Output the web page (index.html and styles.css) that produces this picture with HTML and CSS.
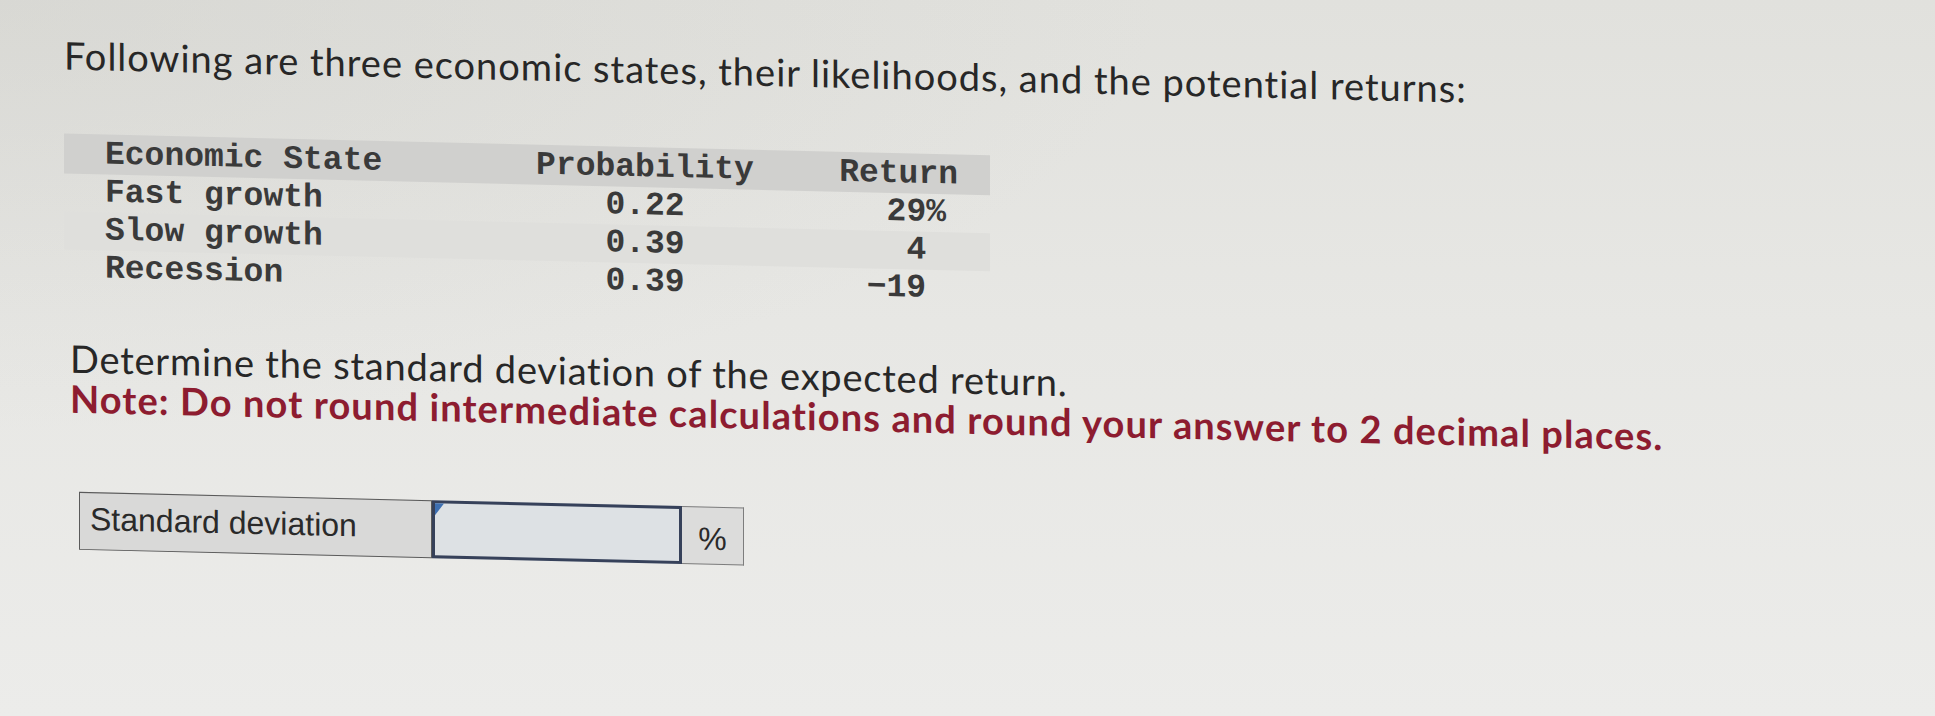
FILE: index.html
```html
<!DOCTYPE html>
<html lang="en">
<head>
<meta charset="utf-8">
<title>Standard deviation question</title>
<link rel="stylesheet" href="styles.css">
</head>
<body>
<div class="page">
  <p class="intro">Following are three economic states, their likelihoods, and the potential returns:</p>
  <div class="table">
    <div class="row head"><div class="c1">Economic State</div><div class="c2">Probability</div><div class="c3 hr">Return</div></div>
    <div class="row"><div class="c1">Fast growth</div><div class="c2">0.22</div><div class="c3">29<span class="pct">%</span></div></div>
    <div class="row alt"><div class="c1">Slow growth</div><div class="c2">0.39</div><div class="c3">4<span class="pct ghost">%</span></div></div>
    <div class="row"><div class="c1">Recession</div><div class="c2">0.39</div><div class="c3">&minus;19<span class="pct ghost">%</span></div></div>
  </div>
  <div class="question">
    <p class="q">Determine the standard deviation of the expected return.</p>
    <p class="note">Note: Do not round intermediate calculations and round your answer to 2 decimal places.</p>
  </div>
  <div class="answer">
    <div class="label">Standard deviation</div>
    <div class="input"><span class="flag"></span></div>
    <div class="unit">%</div>
  </div>
</div>
</body>
</html>
```

FILE: styles.css
```css
html, body {
  margin: 0;
  padding: 0;
}
body {
  width: 1935px;
  height: 716px;
  overflow: hidden;
  background:
    radial-gradient(ellipse 60% 60% at 0% 0%, rgba(200, 200, 195, 0.35), rgba(200, 200, 195, 0) 100%),
    linear-gradient(180deg, #e1e1dd 0%, #e7e7e4 45%, #ececea 100%);
  font-family: Lato, "Open Sans", sans-serif;
  color: #272727;
}
.page {
  padding: 31px 0 0 64px;
  transform: skewY(1.35deg);
  transform-origin: 0 0;
}
.intro {
  margin: 0;
  font-size: 38px;
  line-height: 44px;
  letter-spacing: 1px;
}
.table {
  margin-top: 57px;
  width: 926px;
  font-family: "Liberation Mono", "Courier New", monospace;
  font-size: 33px;
  font-weight: 700;
  color: #3a3a3a;
}
.row {
  display: grid;
  grid-template-columns: 456px 250px 220px;
  height: 38px;
  line-height: 38px;
}
.row.head {
  height: 40px;
  line-height: 42px;
  background: #d0d0ce;
}
.row.alt {
  background: #dfdfdc;
}
.c1 {
  padding-left: 41px;
}
.c2 {
  text-align: center;
}
.c3 {
  text-align: right;
  padding-right: 44px;
}
.c3.hr {
  padding-right: 32px;
}
.ghost {
  visibility: hidden;
}
.question {
  margin-top: 50px;
  padding-left: 6px;
}
.question p {
  margin: 0;
  font-size: 38px;
  line-height: 40px;
  letter-spacing: 0.8px;
}
.question .note {
  font-weight: 700;
  color: #8d1c30;
  letter-spacing: 1.1px;
}
.answer {
  margin: 74px 0 0 15px;
  display: flex;
  align-items: stretch;
  height: 58px;
}
.label {
  width: 341px;
  padding-left: 10px;
  border: 1px solid #5a5a5a;
  background: #d9d9d8;
  font-family: "Liberation Sans", Arial, sans-serif;
  font-size: 32px;
  line-height: 52px;
  color: #2a2a2a;
}
.input {
  position: relative;
  width: 244px;
  border: 3px solid #36415a;
  background: #dde1e4;
}
.flag {
  position: absolute;
  left: 0;
  top: 0;
  width: 0;
  height: 0;
  border-top: 12px solid #3d6fb1;
  border-right: 9px solid transparent;
}
.unit {
  width: 61px;
  border: 1px solid #7d7d7d;
  border-left: none;
  background: #dcdcdb;
  font-family: "Liberation Sans", Arial, sans-serif;
  font-size: 32px;
  line-height: 62px;
  text-align: center;
  color: #2a2a2a;
}
```
